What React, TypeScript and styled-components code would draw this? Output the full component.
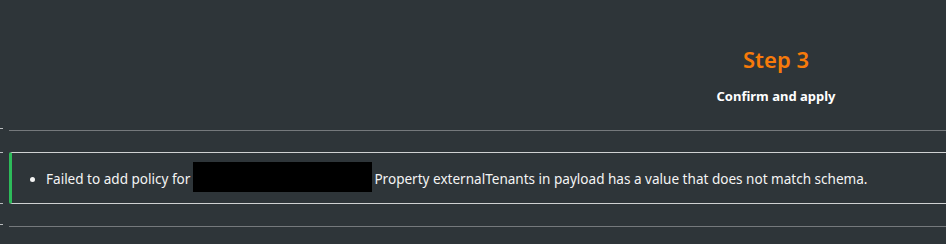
import React from "react";
import styled, { createGlobalStyle } from "styled-components";

const Global = createGlobalStyle`
  html, body { margin: 0; padding: 0; background: #2e3539; }
  body { font-family: "Noto Sans", "Open Sans", sans-serif; color: #f2f2f2; overflow: hidden; }
`;

const Page = styled.div`
  width: 946px;
  height: 244px;
  background: #2e3539;
  display: flex;
  flex-direction: column;
`;

const Header = styled.header`
  display: grid;
  grid-template-columns: 1fr 340px;
  height: 128px;
`;

const StepBlock = styled.div`
  display: flex;
  flex-direction: column;
  align-items: center;
  padding-top: 44px;
`;

const StepTitle = styled.h2`
  margin: 0;
  font-size: 22px;
  font-weight: 600;
  line-height: 30px;
  color: #f77a0a;
`;

const StepSub = styled.div`
  margin-top: 13px;
  font-size: 13px;
  font-weight: 700;
  line-height: 18px;
  color: #ffffff;
`;

const Row = styled.div`
  display: flex;
  align-items: stretch;
`;

const Gutter = styled.div`
  width: 3px;
  flex: none;
  display: flex;
  flex-direction: column;
  justify-content: space-between;
  margin-right: 6px;
`;

const Tick = styled.span`
  display: block;
  height: 1px;
  background: #b9bcbe;
`;

const Rule = styled.hr<{ $offset: number }>`
  flex: 1;
  margin: ${(p) => p.$offset}px 0 0 0;
  border: 0;
  border-top: 1px solid #75797c;
  height: 0;
`;

const RuleRow = styled.div`
  display: flex;
  align-items: flex-start;
  height: 4px;
`;

const RuleGutter = styled.div`
  width: 3px;
  margin-right: 6px;
`;

const Alert = styled.div`
  flex: 1;
  border: 1px solid #cfd1d2;
  border-left: 3px solid #2dbb5a;
  border-right: none;
  border-radius: 2px 0 0 2px;
  padding: 9px 0 9px 0;
`;

const List = styled.ul`
  margin: 0;
  padding-left: 34px;
  font-size: 13.55px;
  line-height: 30px;
  color: #f4f4f4;
  li::marker { font-size: 13px; }
`;

const Redacted = styled.span`
  display: inline-block;
  width: 179px;
  height: 30px;
  background: #000;
  vertical-align: -8px;
  margin: 0 2px 0 3px;
`;

const Spacer = styled.div<{ $h: number }>`
  height: ${(p) => p.$h}px;
`;

export default function App() {
  return (
    <>
      <Global />
      <Page>
        <Header>
          <div />
          <StepBlock>
            <StepTitle>Step 3</StepTitle>
            <StepSub>Confirm and apply</StepSub>
          </StepBlock>
        </Header>
        <RuleRow>
          <RuleGutter>
            <Tick />
          </RuleGutter>
          <Rule $offset={2} />
        </RuleRow>
        <Spacer $h={20} />
        <Row>
          <Gutter>
            <Tick />
            <Tick />
          </Gutter>
          <Alert>
            <List>
              <li>
                Failed to add policy for<Redacted aria-label="redacted" />Property externalTenants in payload has a value that does not match schema.
              </li>
            </List>
          </Alert>
        </Row>
        <Spacer $h={20} />
        <RuleRow>
          <RuleGutter>
            <Tick />
          </RuleGutter>
          <Rule $offset={2} />
        </RuleRow>
      </Page>
    </>
  );
}
